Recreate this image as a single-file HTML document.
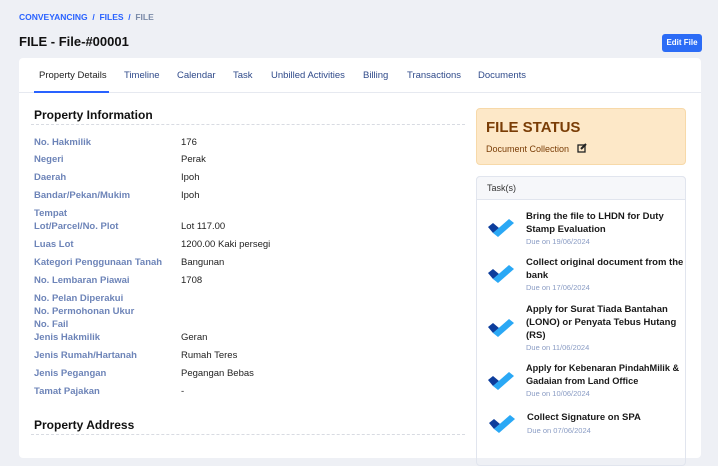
<!DOCTYPE html>
<html><head><meta charset="utf-8"><style>
*{margin:0;padding:0;box-sizing:border-box}
body{width:718px;height:447px;overflow:hidden;background:#eef0f5;font-family:"Liberation Sans",sans-serif;position:relative}
.a{position:absolute;white-space:nowrap}
.bc{top:12px;left:19px;font-size:8.5px;font-weight:bold;color:#2962ff}
.bc span{color:#7a8aa8}
.title{top:34px;left:19px;font-size:13px;font-weight:bold;color:#111}
.btn{top:34px;left:662px;width:40px;height:18px;background:#2c6cf6;border-radius:3px;color:#fff;font-size:8px;font-weight:bold;text-align:center;line-height:18px}
.card{top:58px;left:19px;width:682px;height:400px;background:#fff;border-radius:4px}
.tabs{top:58px;left:19px;width:682px;height:35px;border-bottom:1px solid #e6e9f0}
.tab{top:70px;font-size:9.5px;color:#2f4a8a}
.ul{top:91px;left:34px;width:75px;height:2px;background:#2962ff}
.h{font-size:12px;font-weight:bold;color:#111}
.dot{height:0;border-top:1px dashed #d8dbe2}
.l{left:34px;font-size:9.5px;font-weight:bold;color:#6d84b8}
.v{left:181px;font-size:9.5px;color:#222}
.fs{top:108px;left:476px;width:210px;height:57px;background:#fde8c8;border:1px solid #f7d9a9;border-radius:4px}
.tk{top:176px;left:476px;width:210px;height:290px;border:1px solid #e1e5ee;border-radius:4px}
.tkh{top:176px;left:476px;width:210px;height:24px;background:#f6f7fa;border:1px solid #e1e5ee;border-radius:4px 4px 0 0;font-size:9px;color:#333;padding:6px 10px}
.tt{left:526px;font-size:9.5px;font-weight:bold;color:#1a1a1a;line-height:13px;white-space:normal;width:162px}
.due{left:526px;font-size:7.5px;color:#8a9cc4}
</style></head><body>
<div class="a bc">CONVEYANCING &nbsp;/&nbsp; FILES &nbsp;/&nbsp; <span>FILE</span></div>
<div class="a title">FILE - File-#00001</div>
<div class="a btn">Edit File</div>
<div class="a card"></div>
<div class="a tabs"></div>
<div class="a tab" style="left:39px;color:#222">Property Details</div>
<div class="a tab" style="left:124px">Timeline</div>
<div class="a tab" style="left:177px">Calendar</div>
<div class="a tab" style="left:233px">Task</div>
<div class="a tab" style="left:271px">Unbilled Activities</div>
<div class="a tab" style="left:363px">Billing</div>
<div class="a tab" style="left:407px">Transactions</div>
<div class="a tab" style="left:478px">Documents</div>
<div class="a ul"></div>

<div class="a h" style="top:108px;left:34px">Property Information</div>
<div class="a dot" style="top:124px;left:31px;width:434px"></div>
<div class="a l" style="top:137px">No. Hakmilik</div><div class="a v" style="top:137px">176</div>
<div class="a l" style="top:154px">Negeri</div><div class="a v" style="top:154px">Perak</div>
<div class="a l" style="top:172px">Daerah</div><div class="a v" style="top:172px">Ipoh</div>
<div class="a l" style="top:190px">Bandar/Pekan/Mukim</div><div class="a v" style="top:190px">Ipoh</div>
<div class="a l" style="top:208px">Tempat</div>
<div class="a l" style="top:221px">Lot/Parcel/No. Plot</div><div class="a v" style="top:221px">Lot 117.00</div>
<div class="a l" style="top:239px">Luas Lot</div><div class="a v" style="top:239px">1200.00 Kaki persegi</div>
<div class="a l" style="top:257px">Kategori Penggunaan Tanah</div><div class="a v" style="top:257px">Bangunan</div>
<div class="a l" style="top:275px">No. Lembaran Piawai</div><div class="a v" style="top:275px">1708</div>
<div class="a l" style="top:293px">No. Pelan Diperakui</div>
<div class="a l" style="top:306px">No. Permohonan Ukur</div>
<div class="a l" style="top:319px">No. Fail</div>
<div class="a l" style="top:332px">Jenis Hakmilik</div><div class="a v" style="top:332px">Geran</div>
<div class="a l" style="top:350px">Jenis Rumah/Hartanah</div><div class="a v" style="top:350px">Rumah Teres</div>
<div class="a l" style="top:368px">Jenis Pegangan</div><div class="a v" style="top:368px">Pegangan Bebas</div>
<div class="a l" style="top:386px">Tamat Pajakan</div><div class="a v" style="top:386px">-</div>
<div class="a h" style="top:418px;left:34px">Property Address</div>
<div class="a dot" style="top:434px;left:31px;width:434px"></div>

<div class="a fs"></div>
<div class="a" style="top:119px;left:486px;font-size:15px;font-weight:bold;color:#7a3d06">FILE STATUS</div>
<div class="a" style="top:144px;left:486px;font-size:9px;color:#7a3d06">Document Collection</div>
<svg class="a" style="top:143px;left:577px" width="10" height="10" viewBox="0 0 10 10"><rect x="1" y="2" width="7" height="7" fill="none" stroke="#222" stroke-width="1.3"/><path d="M4 6L9 1" stroke="#222" stroke-width="2"/></svg>

<div class="a tk"></div>
<div class="a tkh">Task(s)</div>

<svg class="a" style="top:217px;left:487px" width="28" height="20" viewBox="0 0 28 20"><path d="M1 10L6 6L12 11L6 16Z" fill="#0d3d9c"/><path d="M6 16L22 2L27 6L11 20Z" fill="#2aa8f5"/></svg>
<div class="a tt" style="top:210px">Bring the file to LHDN for Duty Stamp Evaluation</div>
<div class="a due" style="top:237px">Due on 19/06/2024</div>

<svg class="a" style="top:263px;left:487px" width="28" height="20" viewBox="0 0 28 20"><path d="M1 10L6 6L12 11L6 16Z" fill="#0d3d9c"/><path d="M6 16L22 2L27 6L11 20Z" fill="#2aa8f5"/></svg>
<div class="a tt" style="top:256px">Collect original document from the bank</div>
<div class="a due" style="top:283px">Due on 17/06/2024</div>

<svg class="a" style="top:317px;left:487px" width="28" height="20" viewBox="0 0 28 20"><path d="M1 10L6 6L12 11L6 16Z" fill="#0d3d9c"/><path d="M6 16L22 2L27 6L11 20Z" fill="#2aa8f5"/></svg>
<div class="a tt" style="top:303px">Apply for Surat Tiada Bantahan (LONO) or Penyata Tebus Hutang (RS)</div>
<div class="a due" style="top:343px">Due on 11/06/2024</div>

<svg class="a" style="top:370px;left:487px" width="28" height="20" viewBox="0 0 28 20"><path d="M1 10L6 6L12 11L6 16Z" fill="#0d3d9c"/><path d="M6 16L22 2L27 6L11 20Z" fill="#2aa8f5"/></svg>
<div class="a tt" style="top:362px;font-size:9.2px">Apply for Kebenaran PindahMilik &amp; Gadaian from Land Office</div>
<div class="a due" style="top:389px">Due on 10/06/2024</div>

<svg class="a" style="top:413px;left:488px" width="28" height="20" viewBox="0 0 28 20"><path d="M1 10L6 6L12 11L6 16Z" fill="#0d3d9c"/><path d="M6 16L22 2L27 6L11 20Z" fill="#2aa8f5"/></svg>
<div class="a tt" style="top:411px;left:527px">Collect Signature on SPA</div>
<div class="a due" style="top:426px;left:527px">Due on 07/06/2024</div>
</body></html>
